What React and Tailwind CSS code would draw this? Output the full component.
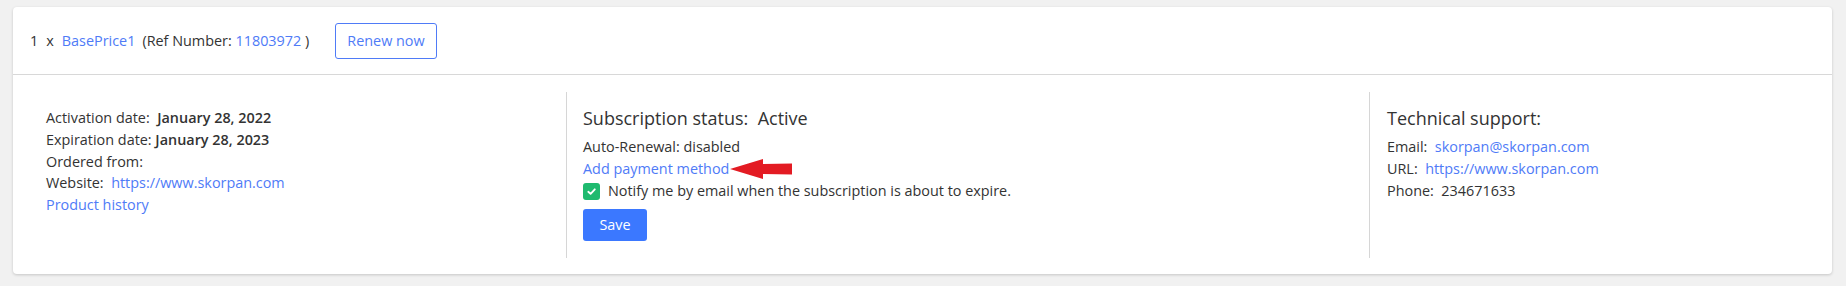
import React, { useState } from 'react';

const link = 'text-[#4f7bf7] hover:underline';

const App = () => {
  const [notify, setNotify] = useState(true);

  return (
    <div className="min-h-[286px] bg-[#f1f1f1] pt-[7px] px-[13px] font-['Open_Sans',sans-serif] text-[14.4px] text-[#333]">
      <div className="bg-white rounded-[4px] shadow-[0_1px_3px_rgba(0,0,0,0.18)] w-[1819px]">
        {/* header */}
        <div className="h-[68px] flex items-center pl-[17px] border-b border-[#d8d8d8]">
          <span>1</span>
          <span className="ml-[8px]">x</span>
          <a className={`ml-[8px] ${link}`}>BasePrice1</a>
          <span className="ml-[7px]">(Ref Number: <a className={link}>11803972</a> )</span>
          <button className="ml-[26px] h-[36px] px-[11px] border border-[#4f7bf7] rounded-[3px] text-[#4f7bf7]">Renew now</button>
        </div>

        {/* body */}
        <div className="flex pt-[17px] pb-[16px]">
          <div className="w-[553px] pl-[33px] pt-[15px] leading-[21.8px]">
            <div>Activation date:&nbsp; <b className="font-semibold">January 28, 2022</b></div>
            <div>Expiration date: <b className="font-semibold">January 28, 2023</b></div>
            <div>Ordered from:</div>
            <div>Website:&nbsp; <a className={link}>https://www.skorpan.com</a></div>
            <div><a className={link}>Product history</a></div>
          </div>

          <div className="w-[803px] h-[166px] border-l border-[#d6d6d6] pl-[16px] pt-[14px]">
            <div className="text-[18px] leading-[24px]">Subscription status:&nbsp; Active</div>
            <div className="mt-[6px] leading-[22px]">Auto-Renewal: disabled</div>
            <div className="leading-[22px] flex items-center">
              <a className={link}>Add payment method</a>
              <svg width="63" height="22" viewBox="0 0 63 22" className="ml-[1px]">
                <path d="M0 11 L33 1 L33 6 L62 5.5 L62 16.5 L33 16 L33 21 Z" fill="#e31b23" />
              </svg>
            </div>
            <label className="flex items-center leading-[22px] cursor-pointer">
              <button
                type="button"
                onClick={() => setNotify(v => !v)}
                className={`w-[17px] h-[17px] rounded-[3px] flex items-center justify-center ${notify ? 'bg-[#1fba6f]' : 'border border-[#bbb] bg-white'}`}
              >
                {notify && (
                  <svg width="11" height="11" viewBox="0 0 12 12">
                    <path d="M2.5 6.3 L5 8.6 L9.6 3.6" fill="none" stroke="#fff" strokeWidth="2" strokeLinecap="round" strokeLinejoin="round" />
                  </svg>
                )}
              </button>
              <span className="ml-[8px]">Notify me by email when the subscription is about to expire.</span>
            </label>
            <button className="mt-[7px] w-[64px] h-[32px] rounded-[3px] bg-[#3b78ff] text-white">Save</button>
          </div>

          <div className="flex-1 h-[166px] border-l border-[#d6d6d6] pl-[17px] pt-[14px]">
            <div className="text-[18px] leading-[24px]">Technical support:</div>
            <div className="mt-[6px] leading-[22px]">Email:&nbsp; <a className={link}>skorpan@skorpan.com</a></div>
            <div className="leading-[22px]">URL:&nbsp; <a className={link}>https://www.skorpan.com</a></div>
            <div className="leading-[22px]">Phone:&nbsp; 234671633</div>
          </div>
        </div>
      </div>
    </div>
  );
};

export default App;
